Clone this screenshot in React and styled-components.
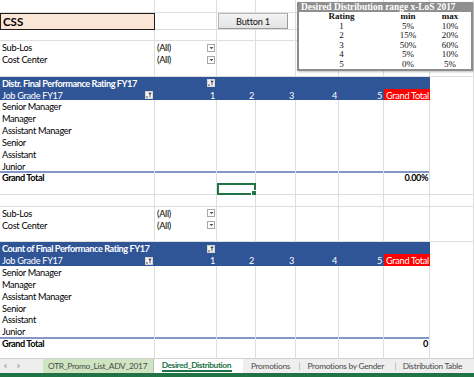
import styled, { createGlobalStyle } from 'styled-components';

const GlobalStyle = createGlobalStyle`
  html, body { margin: 0; padding: 0; background: #fff; }
  body { font-family: Lato, "Liberation Sans", sans-serif; overflow: hidden; }
`;

const COLS = '155px 62px 39px 40px 43px 45px 46px 44px';
const GRID = '#dedede';
const BLUE = '#2f5597';

const Window = styled.div`
  position: relative;
  width: 474px;
  height: 377px;
  display: flex;
  flex-direction: column;
  overflow: hidden;
`;

const Sheet = styled.div`
  height: 358px;
  flex-shrink: 0;
  overflow: hidden;
  display: flex;
  flex-direction: column;
`;

const Row = styled.div`
  display: grid;
  grid-template-columns: ${COLS};
  height: ${p => p.$h || 11.83}px;
  flex-shrink: 0;
`;

const Cell = styled.div`
  position: relative;
  box-sizing: border-box;
  display: flex;
  align-items: center;
  justify-content: ${p => (p.$right ? 'flex-end' : 'flex-start')};
  padding: 1px 1px 0 2px;
  font-size: 9.2px;
  letter-spacing: ${p => (p.$bold ? '-0.45px' : '-0.3px')};
  white-space: nowrap;
  font-weight: ${p => (p.$bold ? 700 : 400)};
  color: ${p => (p.$tone ? '#fff' : '#000')};
  background: ${p => (p.$tone === 'blue' ? BLUE : p.$tone === 'red' ? '#ff0000' : '#fff')};
  border-right: 1px solid ${p => (p.$tone === 'blue' ? BLUE : p.$tone === 'red' ? '#ff0000' : GRID)};
  border-bottom: 1px solid ${p => (p.$tone === 'blue' ? BLUE : p.$tone === 'red' ? '#ff0000' : GRID)};
  box-shadow: ${p => (p.$rule ? 'inset 0 2px 0 #8497c6' : 'none')};
`;

const TitleCell = styled(Cell)`
  background: #fbe5d6;
  border: 1.5px solid #1e1e1e;
  font-size: 11.5px;
  letter-spacing: 0;
  font-weight: 700;
`;

const SelectedCell = styled(Cell)`
  border: 2px solid #217346;
  &::after {
    content: '';
    position: absolute;
    right: -3px;
    bottom: -3px;
    width: 4px;
    height: 4px;
    background: #217346;
    border: 1px solid #fff;
  }
`;

const MiniButton = styled.span`
  margin-left: auto;
  width: 8px;
  height: 8px;
  box-sizing: border-box;
  border: 1px solid ${p => (p.$filter ? '#d6d6d6' : '#a8a8a8')};
  background: ${p => (p.$filter ? '#f3f3f3' : '#fff')};
  display: flex;
  align-items: center;
  justify-content: center;
`;

const ButtonOne = styled.div`
  position: absolute;
  left: 218px;
  top: 13px;
  width: 70px;
  height: 16px;
  box-sizing: border-box;
  border: 1px solid #b8b8b8;
  border-right-color: #9a9a9a;
  border-bottom-color: #9a9a9a;
  background: linear-gradient(#f3f3f3, #e3e3e3);
  display: flex;
  align-items: center;
  justify-content: center;
  font-size: 9.2px;
  letter-spacing: -0.2px;
  color: #111;
`;

const DistBox = styled.div`
  position: absolute;
  left: 297px;
  top: 2px;
  width: 176px;
  height: 69px;
  box-sizing: border-box;
  border: 2px solid #8c8c8c;
  border-top: none;
  background: #fff;
  box-shadow: 1px 1px 2px rgba(0, 0, 0, 0.25);
  font-family: "Liberation Serif", "DejaVu Serif", serif;
`;

const DistTitle = styled.div`
  height: 10px;
  background: #8f8f8f;
  color: #fff;
  font-size: 9.4px;
  font-weight: 700;
  line-height: 10px;
  padding-left: 2px;
  white-space: nowrap;
  overflow: hidden;
`;

const DistGrid = styled.div`
  display: grid;
  grid-template-columns: 85px 48px 36px;
  grid-auto-rows: 9.6px;
  font-size: 9px;
  color: #111;
`;

const DistCell = styled.div`
  text-align: center;
  line-height: 9.6px;
  font-weight: ${p => (p.$head ? 700 : 400)};
`;

const TabBar = styled.div`
  height: 15px;
  box-sizing: border-box;
  border-top: 1px solid #d2d2d2;
  background: #eeeeee;
  display: flex;
  align-items: stretch;
  font-size: 8.4px;
  letter-spacing: -0.3px;
`;

const Nav = styled.div`
  width: 43px;
  display: flex;
  align-items: center;
  gap: 10px;
  padding-left: 3px;
  box-sizing: border-box;
`;

const Tab = styled.div`
  box-sizing: border-box;
  width: ${p => p.$w}px;
  display: flex;
  align-items: center;
  justify-content: ${p => (p.$center ? 'center' : 'flex-start')};
  padding-left: ${p => (p.$center ? 0 : 8)}px;
  color: ${p => (p.$active ? '#217346' : '#4a4a4a')};
  font-weight: ${p => (p.$active ? 700 : 400)};
  background: ${p => (p.$green ? '#cfe5c2' : p.$active ? '#fff' : 'transparent')};
  border-right: 1px solid ${p => (p.$green ? '#bcbcbc' : 'transparent')};
  white-space: nowrap;
  position: relative;
  &::before {
    content: '';
    display: ${p => (p.$sep ? 'block' : 'none')};
    position: absolute;
    left: 0;
    top: 3px;
    bottom: 3px;
    width: 1px;
    background: #c4c4c4;
  }
`;

const ActiveLabel = styled.span`
  border-bottom: 2px solid #217346;
  line-height: 10px;
  padding-right: 1px;
  letter-spacing: -0.4px;
`;

const GreenStrip = styled.div`
  height: 4px;
  background: #217346;
`;

const FilterIcon = () => (
  <svg width="6" height="6" viewBox="0 0 6 6">
    <circle cx="1" cy="5" r="0.8" fill="#333" />
    <path d="M2.3 0.8h3.4L4.4 2.6V5.4L3.6 4.9V2.6Z" fill="#333" />
  </svg>
);

const DropIcon = () => (
  <svg width="5" height="4" viewBox="0 0 5 4">
    <path d="M0.5 1h4L2.5 3.2Z" fill="#555" />
  </svg>
);

const Arrow = ({ dir }) => (
  <svg width="4" height="6" viewBox="0 0 4 6">
    <path d={dir === 'left' ? 'M3.5 0.5v5L0.5 3Z' : 'M0.5 0.5v5L3.5 3Z'} fill="#b5b5b5" />
  </svg>
);

const Blank = ({ n = 8 }) =>
  Array.from({ length: n }, (_, i) => <Cell key={i} />);

const EmptyRow = ({ h }) => (
  <Row $h={h}>
    <Blank />
  </Row>
);

const FilterRow = ({ label }) => (
  <Row>
    <Cell>{label}</Cell>
    <Cell>
      (All)
      <MiniButton>
        <DropIcon />
      </MiniButton>
    </Cell>
    <Blank n={6} />
  </Row>
);

const grades = ['Senior Manager', 'Manager', 'Assistant Manager', 'Senior', 'Assistant', 'Junior'];

const Pivot = ({ title, total }) => (
  <>
    <Row>
      <Cell $tone="blue" $bold>{title}</Cell>
      <Cell $tone="blue">
        <MiniButton $filter>
          <FilterIcon />
        </MiniButton>
      </Cell>
      {[0, 1, 2, 3, 4].map(i => (
        <Cell key={i} $tone="blue" />
      ))}
      <Cell />
    </Row>
    <Row>
      <Cell $tone="blue">
        Job Grade FY17
        <MiniButton $filter>
          <FilterIcon />
        </MiniButton>
      </Cell>
      {[1, 2, 3, 4, 5].map(n => (
        <Cell key={n} $tone="blue" $right>
          {n}
        </Cell>
      ))}
      <Cell $tone="red">Grand Total</Cell>
      <Cell />
    </Row>
    {grades.map(g => (
      <Row key={g}>
        <Cell>{g}</Cell>
        <Blank n={7} />
      </Row>
    ))}
    <Row>
      <Cell $bold $rule>Grand Total</Cell>
      {[0, 1, 2, 3, 4].map(i => (
        <Cell key={i} $rule />
      ))}
      <Cell $bold $rule $right>
        {total}
      </Cell>
      <Cell />
    </Row>
  </>
);

const distRows = [
  ['1', '5%', '10%'],
  ['2', '15%', '20%'],
  ['3', '50%', '60%'],
  ['4', '5%', '10%'],
  ['5', '0%', '5%'],
];

export default function App() {
  return (
    <Window>
      <GlobalStyle />
      <Sheet>
        <EmptyRow h={13} />
        <Row $h={16.5}>
          <TitleCell>CSS</TitleCell>
          <Blank n={7} />
        </Row>
        <EmptyRow />
        <FilterRow label="Sub-Los" />
        <FilterRow label="Cost Center" />
        <EmptyRow />
        <Pivot title="Distr. Final Performance Rating FY17" total="0.00%" />
        <Row>
          <Cell />
          <Cell />
          <SelectedCell />
          <Blank n={5} />
        </Row>
        <EmptyRow />
        <FilterRow label="Sub-Los" />
        <FilterRow label="Cost Center" />
        <EmptyRow />
        <Pivot title="Count of Final Performance Rating FY17" total="0" />
        <EmptyRow />
      </Sheet>

      <ButtonOne>Button 1</ButtonOne>

      <DistBox>
        <DistTitle>Desired Distribution range x-LoS 2017</DistTitle>
        <DistGrid>
          <DistCell $head>Rating</DistCell>
          <DistCell $head>min</DistCell>
          <DistCell $head>max</DistCell>
          {distRows.map(r =>
            r.map((v, i) => <DistCell key={r[0] + i}>{v}</DistCell>)
          )}
        </DistGrid>
      </DistBox>

      <TabBar>
        <Nav>
          <Arrow dir="left" />
          <Arrow dir="right" />
        </Nav>
        <Tab $w={112} $green $center>OTR_Promo_List_ADV_2017</Tab>
        <Tab $w={90} $active>
          <ActiveLabel>Desired_Distribution</ActiveLabel>
        </Tab>
        <Tab $w={57}>Promotions</Tab>
        <Tab $w={96} $sep>Promotions by Gender</Tab>
        <Tab $w={80} $sep>Distribution Table</Tab>
      </TabBar>
      <GreenStrip />
    </Window>
  );
}
